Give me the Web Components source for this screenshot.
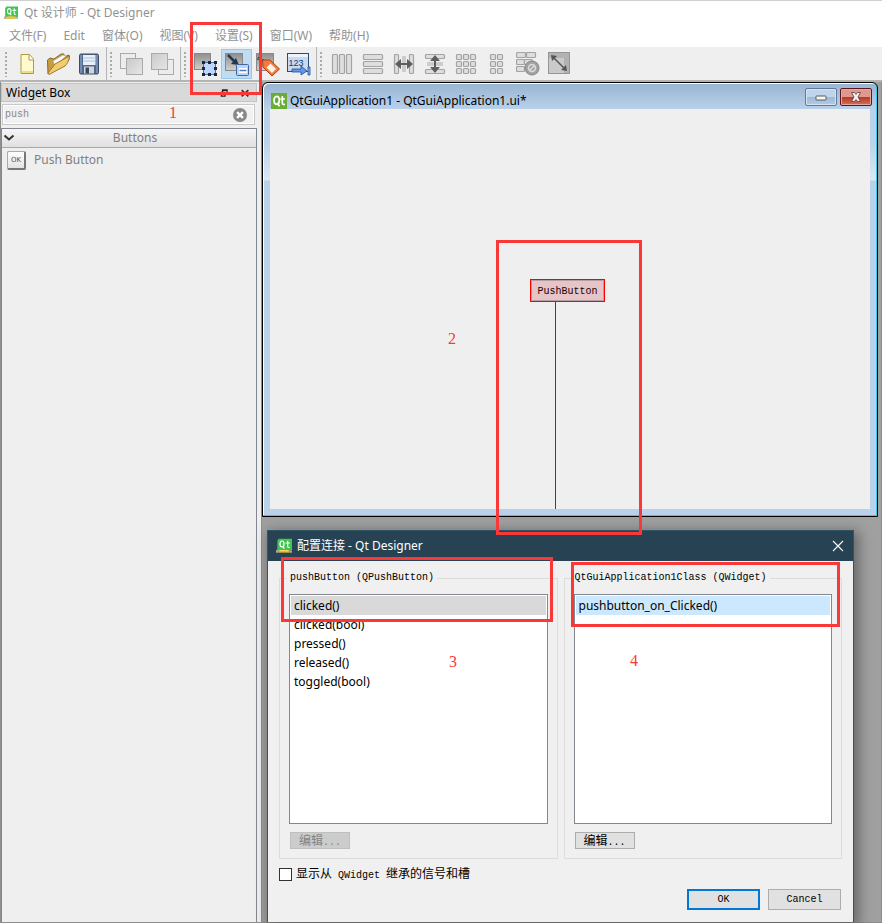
<!DOCTYPE html>
<html lang="zh-CN">
<head>
<meta charset="utf-8">
<title>Qt 设计师 - Qt Designer</title>
<style>
  html, body { height: 100%; margin: 0; }
  body { overflow: hidden; }
</style>
</head>
<body>
<designer-app></designer-app>

<script>
const base = `
  *, *::before, *::after { box-sizing: border-box; }
  button, input { font: inherit; color: inherit; margin: 0; }
  svg { display: block; }
  .mono { font-family: "Liberation Mono", monospace; font-size: 10px; }
`;

function define(name, html) {
  customElements.define(name, class extends HTMLElement {
    connectedCallback() {
      if (this.shadowRoot) return;
      const root = this.attachShadow({ mode: 'open' });
      root.innerHTML = typeof html === 'function' ? html(this) : html;
    }
  });
}

/* ---------- icons ---------- */
const square = (x, y, s, f = 'url(#g)') =>
  `<rect x="${x}" y="${y}" width="${s}" height="${s}" fill="${f}" stroke="#aaa"/>`;
const cell = (x, y, w, h) =>
  `<rect x="${x + .5}" y="${y + .5}" width="${w - 1}" height="${h - 1}" rx="1" fill="#dedede" stroke="#a3a3a3" stroke-width="1.2"/>`;
const cells = (xs, ys, w, h) => ys.map(y => xs.map(x => cell(x, y, w, h)).join('')).join('');
const grey = `<defs><linearGradient id="g" x1="0" y1="0" x2="1" y2="1"><stop offset="0" stop-color="#c9c9c9"/><stop offset="1" stop-color="#e6e6e6"/></linearGradient>
  <linearGradient id="d" x1="0" y1="0" x2="0" y2="1"><stop offset="0" stop-color="#8e8e8e"/><stop offset="1" stop-color="#d0d0cc"/></linearGradient></defs>`;
const icons = {
  'new': `<path d="M6 2.500H14.500L18.500 7V21.500H6Z" fill="#fff9cf" stroke="#b09a3a"/><path d="M14 3V8H18.500" fill="#fff" stroke="#b09a3a"/><path d="M7 19H18V21H7Z" fill="#f1dc83"/>`,
  'open': `<path d="M1.500 8L4 6 8 7 15 2 18 2 18 5 23 3V8L10 17 2 22Z" fill="#c99c3f" stroke="#86672c"/><path d="M7 9L17 3 20 4 9 14Z" fill="#fff" stroke="#b8a98a" stroke-width=".7"/><path d="M9 12L23.500 4C23 9 21 12 19 14L3 22.500 2 21Z" fill="#f3cc70" stroke="#9a7630"/>`,
  'save': `<rect x="2.500" y="2" width="19" height="20" rx="1.500" fill="#56688a" stroke="#3c4a66"/><rect x="6" y="3" width="12.500" height="10" fill="#e8eff6"/><path d="M6 6H18.500M6 9H18.500" stroke="#a8c4e2"/><rect x="7" y="14.500" width="10" height="7" fill="#ccd7e2"/><rect x="8.500" y="15.500" width="3.500" height="6" fill="#3c4a60"/><path d="M4 3V21M20 3V21" stroke="#8fb0dc"/>`,
  'lower': `${grey}${square(0.5, 1.5, 15, '#ececec')}${square(6.5, 6.5, 16)}`,
  'raise': `${grey}${square(7.5, 7.5, 15, '#ececec')}${square(0.5, 1.5, 16)}`,
  'widgets': `${grey}<rect x="0.500" y="1.500" width="16" height="16" fill="url(#d)" stroke="#888"/><rect x="9.500" y="10.500" width="12" height="12" fill="#bcd5fb" stroke="#4a6ea5"/><path d="M8 9h3v3H8zM14 9h3v3h-3zM20 9h3v3h-3zM8 15h3v3H8zM20 15h3v3h-3zM8 21h3v3H8zM14 21h3v3h-3zM20 21h3v3h-3z" fill="#152743"/>`,
  'signals': `${grey}<rect x="0.500" y="1.500" width="17" height="17" fill="url(#d)" stroke="#888"/><path d="M3 3L10 10" stroke="#24364f" stroke-width="2.500"/><path d="M14 13L6 12 11 6Z" fill="#24364f"/><rect x="11.500" y="12.500" width="12" height="11" rx="1" fill="#b9d3fa" stroke="#3f66a0"/><rect x="14" y="16" width="8" height="5" fill="#fff"/><path d="M14.500 18.500H21.500" stroke="#4f7abb" stroke-width="1.500"/>`,
  'buddies': `${grey}<rect x="0.500" y="1.500" width="17" height="17" fill="url(#d)" stroke="#888"/><path d="M1 7L8 8M2 5L6 10" stroke="#333" fill="none"/><path d="M6.500 8L14 8 23.500 17 16 24 7 15Z" fill="#f47b3c" stroke="#a84313"/><path d="M14.500 11.500L20 17 16 21 10.500 15.500Z" fill="#fff3e8"/>`,
  'taborder': `<rect x="0.500" y="1.500" width="21" height="18" fill="#c9d9ee" stroke="#2b4a7c"/><rect x="1" y="2" width="20" height="3" fill="#ecf3fd"/><text x="1.500" y="13.500" font-size="9" font-family="Liberation Sans" fill="#123a83">123</text><path d="M5 17H14V14L20 19 14 23V20H5Z" fill="#5b9aec" stroke="#1f4d95" stroke-width=".8"/><path d="M21 15H23V23H21Z" fill="#87b6f4" stroke="#1f4d95" stroke-width=".8"/>`,
  'hlay': cells([2, 9, 16], [2], 6, 20),
  'vlay': cells([2], [2, 9, 16], 20, 6),
  'hsplit': `${cells([2, 17], [2], 5, 20)}<path d="M11 4V20M13 4V20" stroke="#aaa"/><path d="M3 12L9 7V11H15V7L21 12 15 17V13H9V17Z" fill="#5d5d5d"/>`,
  'vsplit': `${cells([2], [2, 17], 20, 5)}<path d="M4 11H20M4 13H20" stroke="#aaa"/><path d="M12 3L17 9H13V15H17L12 21 7 15H11V9H7Z" fill="#5d5d5d"/>`,
  'grid': cells([2, 9, 16], [2, 9, 16], 6, 6),
  'form': cells([5, 12], [2, 9, 16], 6, 6),
  'break': `${cells([0, 10], [0], 10, 6)}${cells([0, 8], [7], 9, 6)}${cells([0], [14], 9, 6)}<circle cx="16" cy="16" r="7" fill="#a2a2a2" stroke="#858585"/><circle cx="16" cy="16" r="3.500" fill="none" stroke="#dcdcdc" stroke-width="1.500"/><path d="M13.500 18.500L18.500 13.500" stroke="#dcdcdc" stroke-width="1.500"/>`,
  'adjust': `${grey}<rect x="1.500" y="0.500" width="21" height="21" fill="#b2b2b2" stroke="#969696"/><rect x="2" y="6" width="15" height="15" fill="#cacaca"/><path d="M6 5L18 17" stroke="#555" stroke-width="1.500"/><path d="M4 3L10 4 5 9ZM20 19L14 18 19 13Z" fill="#555"/>`,
  'qt': `<path d="M4 1H24V19H2V4Z" fill="#3fc551"/><path d="M4 18H20V22H4Z" fill="#e9b32a"/><path d="M0 18.500L4 17V22H0ZM20 18L24 20V22H20Z" fill="#a7a7a7"/><path d="M6 19H18" stroke="#f8d967" stroke-width="1.500"/><ellipse cx="9" cy="9" rx="3" ry="4.500" fill="none" stroke="#fff" stroke-width="1.800"/><path d="M10 12L12.500 16M14.500 7.500H21M17.500 4V12.500Q17.500 15 20.500 14" fill="none" stroke="#fff" stroke-width="1.800"/>`,
  'qtdoc': `<rect width="24" height="24" fill="#69ae34"/><ellipse cx="8.500" cy="11" rx="4" ry="6" fill="none" stroke="#fff" stroke-width="2.600"/><path d="M9 15L13 20M14 9H21M17 4.500V15Q17 18 21 17" fill="none" stroke="#fff" stroke-width="2.600"/>`,
  'float': `<path d="M7 3H21V16H16V21H4V9H7Z" fill="#222"/><path d="M10 7H18V13H16V9H10ZM7 13H13V18H7Z" fill="#dadada"/>`,
  'x': `<path d="M4 5L20 20M20 5L4 20" stroke="#333" stroke-width="4" fill="none"/>`,
  'thinx': `<path d="M2 2L22 22M22 2L2 22" stroke="#fff" stroke-width="2.200" fill="none"/>`,
  'clear': `<circle cx="12" cy="12" r="12" fill="#888"/><path d="M7 7L17 17M17 7L7 17" stroke="#fff" stroke-width="4"/>`,
  'chevron': `<path d="M3 7L12 15 21 7" fill="none" stroke="#333" stroke-width="4"/>`,
  'min': `<rect x="2" y="10" width="20" height="8" rx="1" fill="#f7f7f2" stroke="#555c66" stroke-width="2"/>`,
  'winx': `<path d="M3 3H9L12 7 15 3H21L16 12 21 21H15L12 17 9 21H3L8 12Z" fill="#f5f5f5" stroke="#6b4444" stroke-width="1.800"/>`,
};

define('ui-icon', el => `<style>
    :host { display: block; flex: none; width: 24px; height: 24px; }
    svg { display: block; width: 100%; height: 100%; }
  </style><svg viewBox="0 0 24 24" aria-hidden="true">${icons[el.getAttribute('name')]}</svg>`);

/* ---------- toolbar ---------- */
define('tool-group', el => `<style>${base}
    :host { display: flex; align-items: center; padding-right: 2px; border-right: 1px solid #b4b4b4; height: 33px; }
    :host([last]) { border: 0; }
    .grip { width: 9px; height: 26px; background: radial-gradient(circle at 4px 2px, #aaa 1px, transparent 1px) 0 0 / 9px 4px; }
    button { display: grid; place-items: center; width: 31px; height: 30px; padding: 0; border: 1px solid transparent; background: none; }
    button.on { background: #bfdcf2; border-color: #9bc8ea; }
  </style><span class="grip"></span>` +
  el.getAttribute('tools').split(' ').map(t =>
    `<button type="button" aria-label="${t}" class="${t === 'signals' ? 'on' : ''}"><ui-icon name="${t}"></ui-icon></button>`).join(''));

/* ---------- widget box ---------- */
define('widget-box', `<style>${base}
    :host { display: flex; flex-direction: column; padding: 1px 0 0; background: #efefef; font: 12px/18px "Noto Sans", "Noto Sans CJK SC", sans-serif; }
    header { display: flex; align-items: center; height: 19px; padding: 0 1px 0 4px; background: #d9d9d9; border: 1px solid #c4c4c4; color: #000; }
    h2 { flex: 1; margin: 0; font: inherit; }
    header button { display: grid; place-items: center; width: 21px; height: 16px; padding: 0; border: 0; background: none; }
    header ui-icon { width: 10px; height: 10px; }
    .search { display: flex; align-items: center; height: 21px; margin: 2px 2px 3px 1px; padding: 0 7px 0 2px; border: 1px solid #c8c8c8; background: #f1f1f1; box-shadow: inset 0 0 0 1px #fff; }
    .search input { flex: 1; min-width: 0; height: 16px; padding: 0; border: 0; outline: 0; background: none; color: #888; font: 10px/16px "Liberation Mono", monospace; }
    .search button { border: 0; padding: 0; background: none; }
    .search ui-icon { width: 14px; height: 14px; }
    .tree { flex: 1; border: 1px solid #828790; border-bottom: 0; }
    .cat { display: flex; align-items: center; width: 100%; height: 19px; padding: 0 1px; border: 0; border-bottom: 1px solid #a8a8a8; background: linear-gradient(#f6f6f6, #e0e0e0); color: #808080; }
    .cat ui-icon { width: 12px; height: 12px; }
    .cat span { flex: 1; text-align: center; }
    .item { display: flex; align-items: center; gap: 8px; padding: 1px 5px; color: #808080; line-height: 22px; }
    .ok { width: 19px; height: 19px; border: 1px solid #999; border-width: 1px 2px 2px 1px; border-color: #aaa #777 #777 #aaa; border-radius: 2px; background: linear-gradient(#fff, #e2e2e2); color: #555; font: 7px/16px "DejaVu Sans", sans-serif; text-align: center; }
  </style>
  <header><h2>Widget Box</h2>
    <button type="button" aria-label="Float"><ui-icon name="float"></ui-icon></button>
    <button type="button" aria-label="Close"><ui-icon name="x"></ui-icon></button></header>
  <div class="search"><input type="text" value="push" aria-label="Filter"><button type="button" aria-label="Clear"><ui-icon name="clear"></ui-icon></button></div>
  <div class="tree">
    <button type="button" class="cat" aria-expanded="true"><ui-icon name="chevron"></ui-icon><span>Buttons</span></button>
    <div class="item"><span class="ok">OK</span><span>Push Button</span></div>
  </div>`);

/* ---------- form window ---------- */
define('form-window', `<style>${base}
    :host { display: block; box-sizing: border-box; padding: 1px 7px 7px; border: 1px solid #000; border-radius: 6px 6px 0 0;
      box-shadow: inset -1px -1px 0 #33cbe8, inset 1px 1px 0 #fff;
      background: linear-gradient(#99b4d1 0, #b9d1ea 26px, #bcd3ec 60px, #dbe7f5 97px, #b9d1ea 98px); }
    header { display: flex; align-items: center; height: 25px; gap: 3px; margin-right: -2px; padding-left: 1px; font: 12px/18px "Noto Sans", "Noto Sans CJK SC", sans-serif; color: #000; }
    header > ui-icon { width: 16px; height: 16px; margin-top: 8px; }
    h2 { flex: 1; margin: 8px 0 0; font: inherit; white-space: nowrap; }
    header button { display: grid; place-items: center; width: 32px; height: 18px; padding: 0; border: 1px solid #62799a; border-radius: 2px; background: linear-gradient(#c0d4eb 50%, #9db8d6 50%, #b4cbe4); box-shadow: inset 0 0 0 1px #d5e3f2; }
    header .close { border-color: #5d1521; background: linear-gradient(#e0978c 50%, #b9361f 50%, #d2705c); box-shadow: inset 0 0 0 1px #e5a79c; }
    header button ui-icon { width: 12px; height: 12px; }
    .canvas { position: relative; height: 400px; background: #efefef; }
    .edge { position: absolute; left: 285px; top: 193px; bottom: 0; width: 1px; background: #dd0000; }
    .push { position: absolute; left: 260px; top: 170px; width: 75px; height: 23px; padding: 2px 0 0; border: 1px solid #f00; background: #e6c5c9; color: #200; box-shadow: inset 0 0 0 1px #b99da0; }
  </style>
  <header><ui-icon name="qtdoc"></ui-icon><h2>QtGuiApplication1 - QtGuiApplication1.ui*</h2>
    <button type="button" aria-label="Minimize"><ui-icon name="min"></ui-icon></button>
    <button type="button" class="close" aria-label="Close"><ui-icon name="winx"></ui-icon></button></header>
  <div class="canvas"><span class="edge"></span><button type="button" class="push mono">PushButton</button></div>`);

/* ---------- signal / slot lists ---------- */
define('member-list', el => `<style>${base}
    :host { display: flex; flex: 1 1 0; min-width: 0; }
    fieldset { display: flex; flex-direction: column; flex: 1; min-width: 0; margin: 0; padding: 7px 9px 9px; border: 1px solid #dcdcdc; }
    legend { padding: 0 3px; margin-left: -2px; line-height: 18px; color: #000; white-space: nowrap; }
    ul { flex: 1; list-style: none; margin: 0 0 8px; padding: 1px; border: 1px solid #828790; background: #fff; font: 12px/19px "Noto Sans", "Noto Sans CJK SC", sans-serif; color: #000; }
    li { padding: 0 3px; height: 19px; }
    li[aria-selected="true"] { background: ${el.hasAttribute('focused') ? '#cce8ff' : '#d9d9d9'}; }
    button { align-self: flex-start; width: 60px; height: 17px; margin-left: 1px; padding: 0; border: 1px solid #adadad; background: #e1e1e1; color: #000; font: 12px/14px "Noto Sans CJK SC", sans-serif; }
    button:disabled { border-color: #bfbfbf; background: #ccc; color: #838383; }
  </style>
  <fieldset><legend class="mono">${el.getAttribute('label')}</legend>
    <ul role="listbox" aria-label="${el.getAttribute('label')}">${el.getAttribute('items').split(' ').map((t, i) => `<li role="option" aria-selected="${i === 0}">${t}</li>`).join('')}</ul>
    <button type="button" ${el.hasAttribute('focused') ? '' : 'disabled'}>编辑<span class="mono">...</span></button>
  </fieldset>`);

define('connect-dialog', `<style>${base}
    :host { display: flex; flex-direction: column; box-sizing: border-box; border: 1px solid #2f5666; border-bottom: 0; background: #f0f0f0; box-shadow: 3px 3px 12px 2px rgba(0,0,0,.35); color: #000; }
    header { display: flex; align-items: center; gap: 5px; height: 30px; padding: 0 9px 0 8px; background: #264253; color: #fff; font: 12px/18px "Noto Sans", "Noto Sans CJK SC", sans-serif; }
    header ui-icon { width: 16px; height: 16px; }
    h2 { flex: 1; margin: 0; font: inherit; }
    header button { padding: 0; border: 0; background: none; }
    header button ui-icon { width: 12px; height: 12px; }
    .lists { display: flex; flex: 1; gap: 6px; padding: 8px 11px 0; }
    label { display: flex; align-items: center; gap: 4px; height: 14px; margin: 8px 11px 0; font: 12px/14px "Noto Sans CJK SC", sans-serif; white-space: pre; }
    input { appearance: none; width: 13px; height: 13px; border: 1px solid #333; background: #fff; }
    footer { display: flex; justify-content: flex-end; gap: 8px; padding: 8px 12px 12px; }
    footer button { width: 73px; height: 21px; padding: 0; border: 1px solid #adadad; background: #e1e1e1; }
    footer .default { border: 2px solid #0078d7; }
  </style>
  <header><ui-icon name="qt"></ui-icon><h2>配置连接 - Qt Designer</h2><button type="button" aria-label="Close"><ui-icon name="thinx"></ui-icon></button></header>
  <div class="lists">
    <member-list label="pushButton (QPushButton)" items="clicked() clicked(bool) pressed() released() toggled(bool)"></member-list>
    <member-list focused label="QtGuiApplication1Class (QWidget)" items="pushbutton_on_Clicked()"></member-list>
  </div>
  <label><input type="checkbox"><span>显示从<span class="mono"> QWidget </span>继承的信号和槽</span></label>
  <footer><button type="button" class="default mono">OK</button><button type="button" class="mono">Cancel</button></footer>`);

/* ---------- annotations ---------- */
define('note-box', `<style>:host { display: block; position: absolute; box-sizing: border-box; border: 3px solid #fb3838; pointer-events: none; }</style>`);
define('note-number', `<style>:host { display: block; position: absolute; color: #fb3838; font: 16px/18px "Liberation Serif", serif; }</style><slot></slot>`);

/* ---------- main window ---------- */
define('designer-app', `<style>${base}
    :host { position: relative; display: flex; flex-direction: column; height: 100%; overflow: hidden; background: #efefef; border-top: 1px solid #d0d0d0; box-sizing: border-box; font: 12px/18px "Noto Sans", "Noto Sans CJK SC", sans-serif; color: #929292; }
    .title { display: flex; align-items: center; gap: 6px; height: 24px; padding: 0 4px; background: #fff; }
    .title ui-icon { width: 14px; height: 14px; }
    h1 { margin: 0; font: inherit; }
    nav { display: flex; align-items: center; gap: 17px; height: 22px; padding: 0 9px; background: #fff; }
    nav button { padding: 0; border: 0; background: none; white-space: nowrap; }
    .tools { display: flex; align-items: center; height: 35px; padding-left: 2px; border-bottom: 2px solid #b4b4b4; }
    main { flex: 1; display: flex; min-height: 0; border: solid #8e8e8e; border-width: 0 1px 1px; }
    widget-box { width: 256px; }
    .mdi { flex: 1; display: flex; flex-direction: column; min-width: 0; margin-left: 4px; border-left: 1px solid #8e8e8e; background: #a0a0a0; }
    form-window { margin: 0 3px 0 0; }
    connect-dialog { flex: 1; margin: 13px 27px 0 5px; }
    .n1 { left: 190px; top: 21px; width: 72px; height: 73px; }
    .n2 { left: 496px; top: 239px; width: 146px; height: 295px; }
    .n3 { left: 281px; top: 556px; width: 272px; height: 65px; }
    .n4 { left: 571px; top: 561px; width: 269px; height: 65px; }
    .l1 { left: 169px; top: 103px; }
    .l2 { left: 448px; top: 329px; }
    .l3 { left: 449px; top: 652px; }
    .l4 { left: 630px; top: 651px; }
  </style>
  <header class="title"><ui-icon name="qt"></ui-icon><h1>Qt 设计师 - Qt Designer</h1></header>
  <nav>${['文件(F)', 'Edit', '窗体(O)', '视图(V)', '设置(S)', '窗口(W)', '帮助(H)'].map(m => `<button type="button">${m}</button>`).join('')}</nav>
  <div class="tools">
    <tool-group tools="new open save"></tool-group>
    <tool-group tools="lower raise"></tool-group>
    <tool-group tools="widgets signals buddies taborder"></tool-group>
    <tool-group last tools="hlay vlay hsplit vsplit grid form break adjust"></tool-group>
  </div>
  <main>
    <widget-box></widget-box>
    <div class="mdi"><form-window></form-window><connect-dialog></connect-dialog></div>
  </main>
  <note-box class="n1"></note-box><note-box class="n2"></note-box><note-box class="n3"></note-box><note-box class="n4"></note-box>
  <note-number class="l1">1</note-number><note-number class="l2">2</note-number><note-number class="l3">3</note-number><note-number class="l4">4</note-number>`);
</script>
</body>
</html>
